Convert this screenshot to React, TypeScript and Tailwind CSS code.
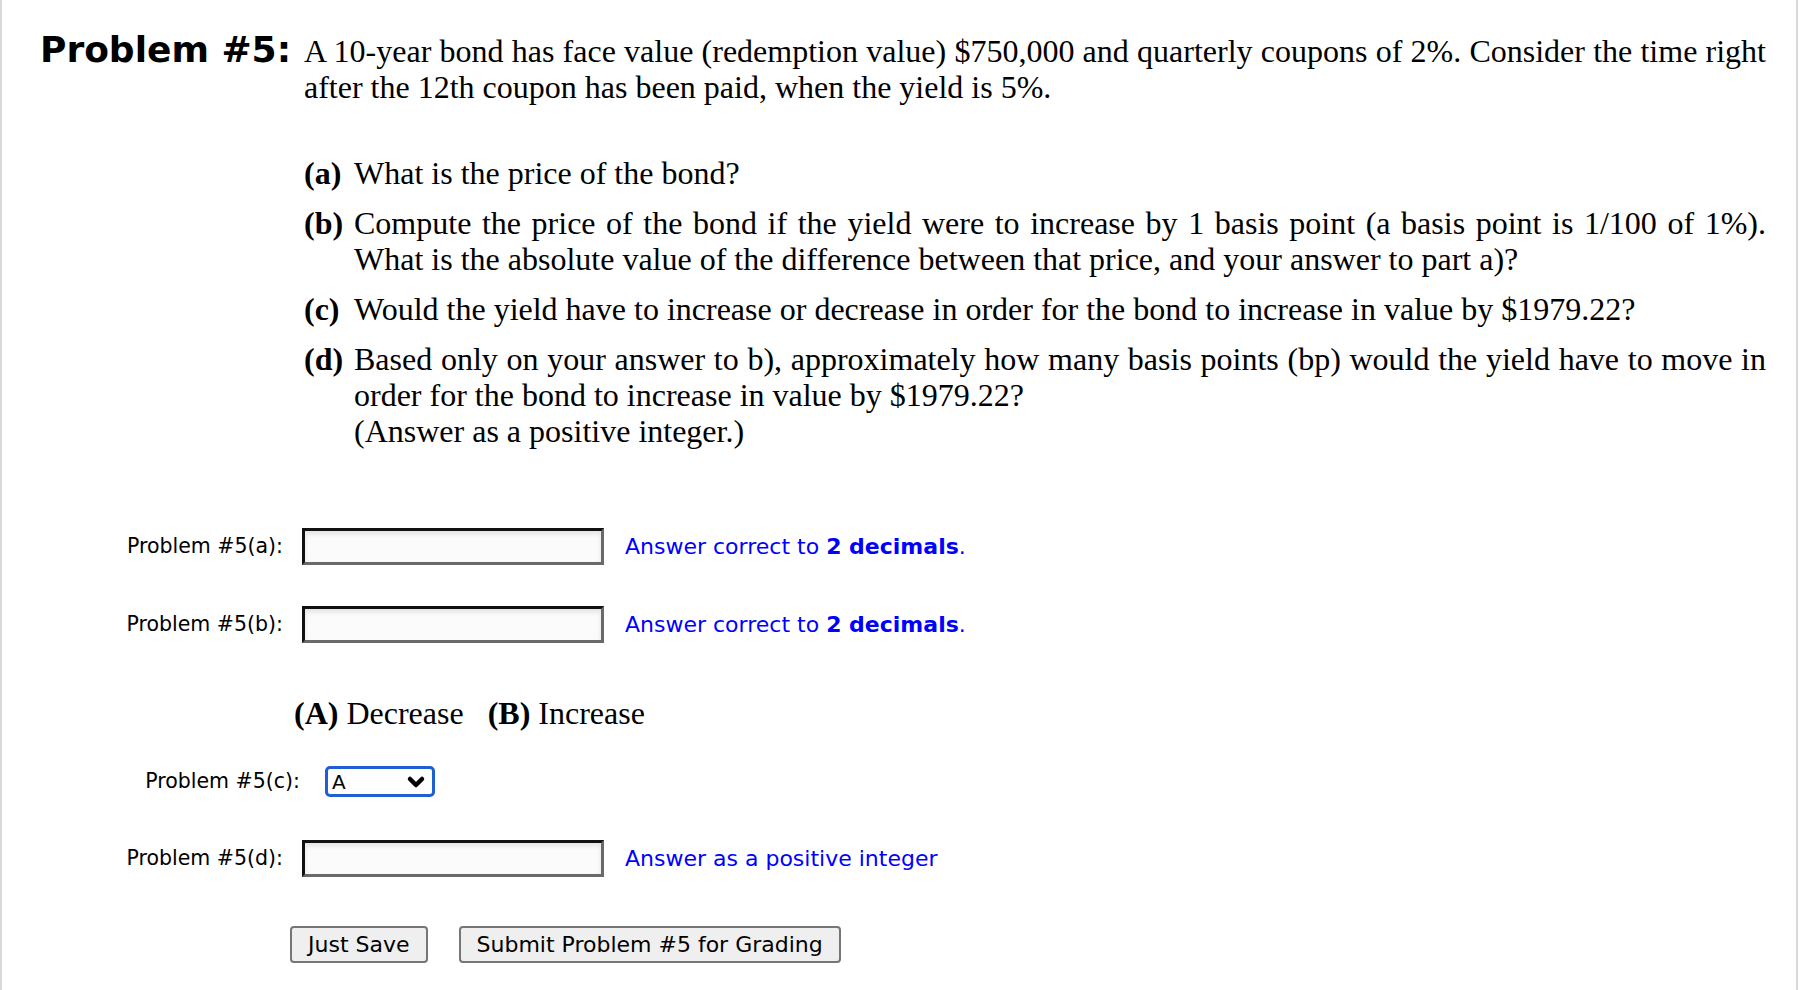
import { ChevronDown } from 'lucide-react';

const serif = "font-['Liberation_Serif','Times_New_Roman',serif]";
const sans = "font-['DejaVu_Sans',Verdana,sans-serif]";

const PARTS: { key: string; text: string[] }[] = [
  { key: 'a', text: ['What is the price of the bond?'] },
  {
    key: 'b',
    text: [
      'Compute the price of the bond if the yield were to increase by 1 basis point (a basis point is 1/100 of 1%). What is the absolute value of the difference between that price, and your answer to part a)?',
    ],
  },
  { key: 'c', text: ['Would the yield have to increase or decrease in order for the bond to increase in value by $1979.22?'] },
  {
    key: 'd',
    text: [
      'Based only on your answer to b), approximately how many basis points (bp) would the yield have to move in order for the bond to increase in value by $1979.22?',
      '(Answer as a positive integer.)',
    ],
  },
];

function AnswerBox() {
  return (
    <input
      type="text"
      className="w-[302px] h-[37px] border-[3px] border-t-[#111] border-l-[#111] border-r-[#6a6a6a] border-b-[#6a6a6a] bg-[#fbfbfb] shadow-[inset_0_3px_5px_rgba(0,0,0,0.1)] outline-none"
    />
  );
}

function Hint({ children }: { children: React.ReactNode }) {
  return <span className={`${sans} text-[22px] text-[#0000ff]`}>{children}</span>;
}

function Row({ label, children, hint }: { label: string; children: React.ReactNode; hint?: React.ReactNode }) {
  return (
    <div className="flex items-center">
      <div className={`${sans} w-[281px] text-right text-[20.5px] text-black`}>{label}</div>
      <div className="ml-[19px]">{children}</div>
      {hint && <div className="ml-[21px]">{hint}</div>}
    </div>
  );
}

export default function App() {
  return (
    <div className="w-[1798px] min-h-[990px] bg-white border-x-2 border-[#d9d9d9] pt-[32px]">
      {/* Problem statement */}
      <div className="flex items-baseline">
        <div className={`${sans} w-[302px] shrink-0 pl-[38px] text-[36px] leading-[36px] font-bold text-black`}>
          Problem #5:
        </div>
        <div className={`${serif} w-[1462px] text-[32px] leading-[36px] text-justify text-black`}>
          A 10-year bond has face value (redemption value) $750,000 and quarterly coupons of 2%. Consider the time right
          after the 12th coupon has been paid, when the yield is 5%.
        </div>
      </div>

      <div className={`${serif} ml-[302px] w-[1462px] mt-[50px] flex flex-col gap-[14px] text-[32px] leading-[36px] text-black`}>
        {PARTS.map((p) => (
          <div key={p.key} className="flex">
            <span className="w-[50px] shrink-0 font-bold">({p.key})</span>
            <div className="flex-1 text-justify">
              {p.text.map((t, i) => (
                <div key={i}>{t}</div>
              ))}
            </div>
          </div>
        ))}
      </div>

      {/* Answer rows */}
      <div className="mt-[79px]">
        <Row
          label="Problem #5(a):"
          hint={
            <Hint>
              Answer correct to <b>2 decimals</b>.
            </Hint>
          }
        >
          <AnswerBox />
        </Row>
      </div>

      <div className="mt-[41px]">
        <Row
          label="Problem #5(b):"
          hint={
            <Hint>
              Answer correct to <b>2 decimals</b>.
            </Hint>
          }
        >
          <AnswerBox />
        </Row>
      </div>

      <div className={`${serif} mt-[52px] ml-[292px] text-[32px] leading-[36px] text-black`}>
        <b>(A)</b> Decrease<span className="inline-block w-[24px]" />
        <b>(B)</b> Increase
      </div>

      <div className="mt-[35px] flex items-center">
        <div className={`${sans} w-[298px] text-right text-[20.5px] text-black`}>Problem #5(c):</div>
        <div className="ml-[25px] w-[110px] h-[31px] rounded-[5px] border-[3px] border-[#1f5fd3] bg-white flex items-center justify-between pl-[4px] pr-[4px]">
          <span className={`${sans} text-[20px] leading-none text-black`}>A</span>
          <ChevronDown size={24} strokeWidth={4.5} className="text-black" />
        </div>
      </div>

      <div className="mt-[43px]">
        <Row label="Problem #5(d):" hint={<Hint>Answer as a positive integer</Hint>}>
          <AnswerBox />
        </Row>
      </div>

      {/* Buttons */}
      <div className="mt-[49px] ml-[288px] flex gap-[31px]">
        <button
          className={`${sans} h-[37px] px-[16px] rounded-[4px] border-2 border-[#767676] bg-[#efefef] text-[22px] leading-none text-black`}
        >
          Just Save
        </button>
        <button
          className={`${sans} h-[37px] px-[16px] rounded-[4px] border-2 border-[#767676] bg-[#efefef] text-[22px] leading-none text-black`}
        >
          Submit Problem #5 for Grading
        </button>
      </div>
    </div>
  );
}
